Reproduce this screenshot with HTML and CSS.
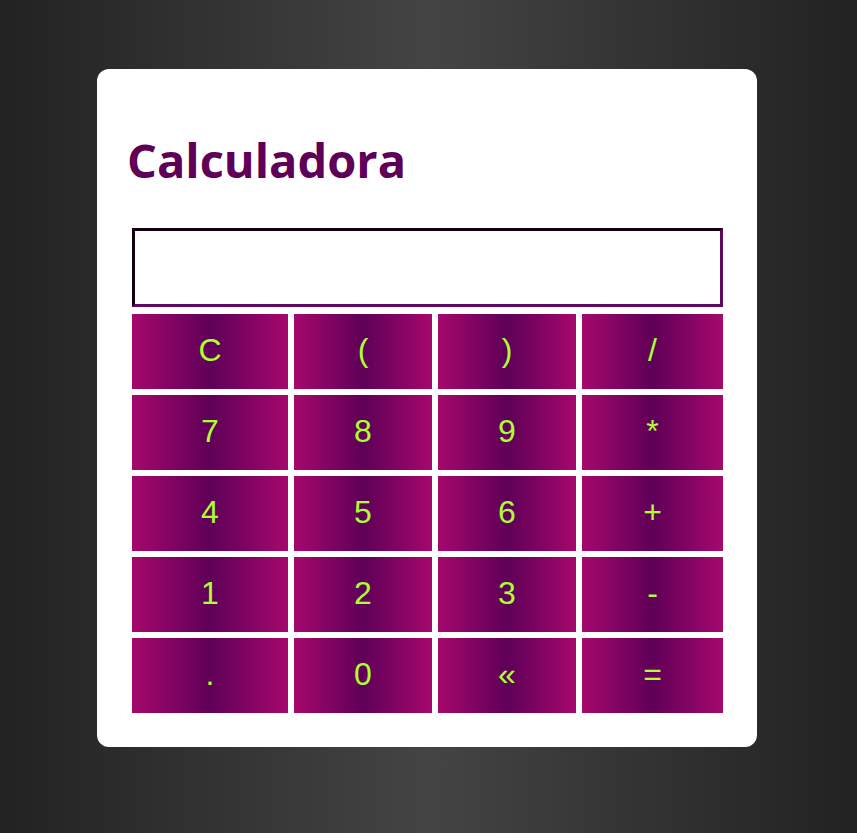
FILE: index.html
```html
<!DOCTYPE html>
<html lang="pt">
<head>
<meta charset="utf-8">
<title>Calculadora</title>
<link rel="stylesheet" href="styles.css">
</head>
<body>
<main class="card">
  <h1 class="title">Calculadora</h1>
  <div class="calc">
    <div class="display"></div>
    <div class="keys">
      <button class="key">C</button>
      <button class="key">(</button>
      <button class="key">)</button>
      <button class="key">/</button>
      <button class="key">7</button>
      <button class="key">8</button>
      <button class="key">9</button>
      <button class="key">*</button>
      <button class="key">4</button>
      <button class="key">5</button>
      <button class="key">6</button>
      <button class="key">+</button>
      <button class="key">1</button>
      <button class="key">2</button>
      <button class="key">3</button>
      <button class="key">-</button>
      <button class="key">.</button>
      <button class="key">0</button>
      <button class="key">&laquo;</button>
      <button class="key">=</button>
    </div>
  </div>
</main>
</body>
</html>
```
FILE: styles.css
```css
html, body {
  margin: 0;
  padding: 0;
}
body {
  min-height: 833px;
  background: linear-gradient(to right, #222222 0%, #444444 50%, #222222 100%);
  padding-top: 69px;
  padding-left: 97px;
  box-sizing: border-box;
}
.card {
  width: 660px;
  box-sizing: border-box;
  background: #ffffff;
  border-radius: 12px;
  padding: 60px 28px 34px 28px;
}
.title {
  margin: 0 0 37px 2px;
  font-family: "Open Sans", sans-serif;
  font-weight: 700;
  font-size: 47px;
  line-height: 62px;
  color: #5f0058;
}
.calc {
  margin: 0 6px 0 7px;
}
.display {
  height: 79px;
  box-sizing: border-box;
  border: 3px solid;
  border-color: #140014 #5e0a62 #5e0a62 #140014;
  background: #fff;
  margin-bottom: 7px;
}
.keys {
  display: grid;
  grid-template-columns: 156px 138px 138px 141px;
  grid-auto-rows: 75px;
  gap: 6px;
}
.key {
  border: 0;
  margin: 0;
  padding: 0 0 2px 0;
  background: linear-gradient(to right, #a5086c 0%, #5f0058 50%, #a5086c 100%);
  color: #adff2f;
  font-family: "Liberation Sans", Arial, sans-serif;
  font-size: 32px;
  cursor: pointer;
}
```
